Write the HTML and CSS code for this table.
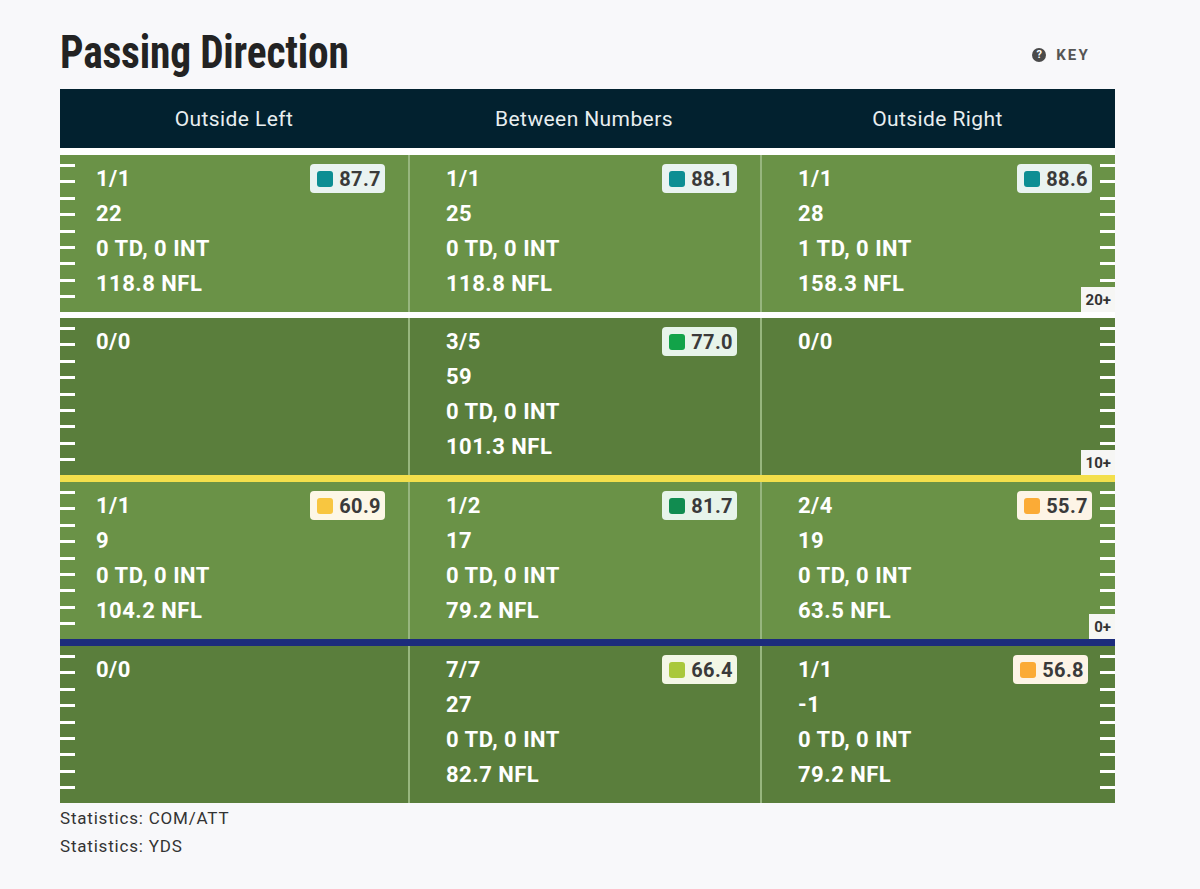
FILE: index.html
```html
<!DOCTYPE html>
<html>
<head>
<meta charset="utf-8">
<link rel="stylesheet" href="styles.css">
</head>
<body>
<div class="page">
  <div class="top">
    <h1 class="title">Passing Direction</h1>
    <div class="key"><span class="key-icon">?</span><span class="key-text">KEY</span></div>
  </div>
  <div class="field">
    <div class="thead">
      <div class="th">Outside Left</div>
      <div class="th">Between Numbers</div>
      <div class="th">Outside Right</div>
    </div>
    <div class="sep sep-white sep-top"></div>
    <div class="row row-light">
      <div class="cell">
        <div class="stats"><div>1/1</div><div>22</div><div>0 TD, 0 INT</div><div>118.8 NFL</div></div>
        <div class="badge b-teal"><span class="sw"></span>87.7</div>
      </div>
      <div class="cell">
        <div class="stats"><div>1/1</div><div>25</div><div>0 TD, 0 INT</div><div>118.8 NFL</div></div>
        <div class="badge b-teal"><span class="sw"></span>88.1</div>
      </div>
      <div class="cell">
        <div class="stats"><div>1/1</div><div>28</div><div>1 TD, 0 INT</div><div>158.3 NFL</div></div>
        <div class="badge b-teal"><span class="sw"></span>88.6</div>
      </div>
      <div class="zone">20+</div>
    </div>
    <div class="sep sep-white"></div>
    <div class="row row-dark">
      <div class="cell">
        <div class="stats"><div>0/0</div></div>
      </div>
      <div class="cell">
        <div class="stats"><div>3/5</div><div>59</div><div>0 TD, 0 INT</div><div>101.3 NFL</div></div>
        <div class="badge b-green"><span class="sw"></span>77.0</div>
      </div>
      <div class="cell">
        <div class="stats"><div>0/0</div></div>
      </div>
      <div class="zone">10+</div>
    </div>
    <div class="sep sep-yellow"></div>
    <div class="row row-light">
      <div class="cell">
        <div class="stats"><div>1/1</div><div>9</div><div>0 TD, 0 INT</div><div>104.2 NFL</div></div>
        <div class="badge b-yellow"><span class="sw"></span>60.9</div>
      </div>
      <div class="cell">
        <div class="stats"><div>1/2</div><div>17</div><div>0 TD, 0 INT</div><div>79.2 NFL</div></div>
        <div class="badge b-green2"><span class="sw"></span>81.7</div>
      </div>
      <div class="cell">
        <div class="stats"><div>2/4</div><div>19</div><div>0 TD, 0 INT</div><div>63.5 NFL</div></div>
        <div class="badge b-orange"><span class="sw"></span>55.7</div>
      </div>
      <div class="zone">0+</div>
    </div>
    <div class="sep sep-blue"></div>
    <div class="row row-dark">
      <div class="cell">
        <div class="stats"><div>0/0</div></div>
      </div>
      <div class="cell">
        <div class="stats"><div>7/7</div><div>27</div><div>0 TD, 0 INT</div><div>82.7 NFL</div></div>
        <div class="badge b-lime"><span class="sw"></span>66.4</div>
      </div>
      <div class="cell">
        <div class="stats"><div>1/1</div><div>-1</div><div>0 TD, 0 INT</div><div>79.2 NFL</div></div>
        <div class="badge b-orange"><span class="sw"></span>56.8</div>
      </div>
    </div>
  </div>
  <div class="legend">
    <div>Statistics: COM/ATT</div>
    <div>Statistics: YDS</div>
  </div>
</div>
</body>
</html>
```

FILE: styles.css
```css
html, body {
  margin: 0;
  padding: 0;
  background: #f8f8fa;
}
body {
  font-family: Roboto, "Liberation Sans", sans-serif;
  color: #222;
}
.page {
  width: 1055px;
  padding: 0 0 0 60px;
}
.top {
  height: 89px;
  display: flex;
  align-items: flex-start;
  justify-content: space-between;
}
.title {
  margin: 0;
  padding-top: 25px;
  font-family: "Roboto Condensed", Roboto, sans-serif;
  font-weight: 700;
  font-size: 46px;
  line-height: 54px;
  color: #232323;
  letter-spacing: -0.2px;
  transform: scaleX(0.9);
  transform-origin: left center;
  white-space: nowrap;
}
.key {
  display: flex;
  align-items: center;
  gap: 10px;
  margin-top: 46px;
  margin-right: 25px;
}
.key-icon {
  width: 14px;
  height: 14px;
  border-radius: 50%;
  background: #4a4a4a;
  color: #fff;
  font-size: 11px;
  font-weight: 700;
  line-height: 14px;
  text-align: center;
}
.key-text {
  font-size: 15px;
  font-weight: 700;
  color: #555;
  letter-spacing: 2.2px;
}
.field {
  width: 1055px;
}
.thead {
  display: grid;
  grid-template-columns: 348px 352px 355px;
  height: 59px;
  background: #02212f;
}
.th {
  display: flex;
  align-items: center;
  justify-content: center;
  color: #e8eef0;
  font-size: 21px;
  letter-spacing: 0.4px;
}
.sep { height: 6px; }
.sep-top { height: 7px; }
.sep-white { background: #ffffff; }
.sep-yellow { background: #f3df4c; height: 7px; }
.sep-blue { background: #1c2c7c; height: 7px; }
.row {
  position: relative;
  display: grid;
  grid-template-columns: 348px 352px 355px;
  height: 157px;
  background-image:
    repeating-linear-gradient(to bottom, transparent 0 9px, #fff 9px 12px, transparent 12px 16.4px),
    repeating-linear-gradient(to bottom, transparent 0 9px, #fff 9px 12px, transparent 12px 16.4px);
  background-size: 15px 150px, 15px 150px;
  background-position: left top, right top;
  background-repeat: no-repeat;
}
.row-light { background-color: #6a9247; }
.row-dark { background-color: #5a7e3c; }
.cell {
  display: flex;
  justify-content: space-between;
  align-items: flex-start;
  padding: 6px 23px 0 36px;
}
.cell + .cell {
  border-left: 2px solid #97b67e;
  padding-left: 36px;
}
.cell:last-of-type {
  padding-right: 27px;
}
.stats {
  color: #fff;
  font-size: 22px;
  font-weight: 700;
  line-height: 35px;
  letter-spacing: 0.5px;
}
.badge {
  display: flex;
  align-items: center;
  gap: 6px;
  height: 29px;
  margin-top: 3px;
  padding: 0 4px 0 7px;
  border-radius: 4px;
  font-size: 20px;
  font-weight: 700;
  color: #3a3a3a;
  letter-spacing: 0.4px;
  box-sizing: border-box;
}
.sw {
  width: 16px;
  height: 16px;
  border-radius: 3px;
  display: inline-block;
}
.b-teal { background: #e9f3f1; }
.b-teal .sw { background: #0d8e93; }
.b-green { background: #e7f4ea; }
.b-green .sw { background: #12a349; }
.b-green2 { background: #e7f4ea; }
.b-green2 .sw { background: #118c50; }
.b-lime { background: #f3f7e6; }
.b-lime .sw { background: #a9c83b; }
.b-yellow { background: #fdf7e6; }
.b-yellow .sw { background: #f8c640; }
.b-orange { background: #fdf4e6; }
.b-orange .sw { background: #fbab36; }
.zone {
  position: absolute;
  right: 0;
  bottom: 0;
  height: 25px;
  padding: 0 4px 0 5px;
  background: #f6f6f4;
  color: #333;
  font-size: 15px;
  font-weight: 700;
  line-height: 27px;
}
.legend {
  padding-top: 1px;
  font-size: 17px;
  line-height: 28px;
  color: #333;
  letter-spacing: 0.8px;
}
```
